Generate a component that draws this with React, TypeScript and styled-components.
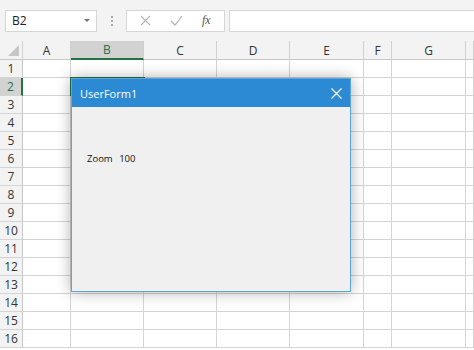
import { Fragment } from "react";
import styled, { createGlobalStyle } from "styled-components";

const GlobalStyle = createGlobalStyle`
    html, body { margin: 0; padding: 0; background: #ffffff; }
    body { font-family: "Open Sans", "Noto Sans", "Liberation Sans", sans-serif; }
`;

const Page = styled.div`
    width: 474px;
    height: 350px;
    overflow: hidden;
    position: relative;
    background: #ffffff;
`;

// Formula bar
const Toolbar = styled.div`
    height: 41px;
    background: #f3f3f3;
    display: flex;
    align-items: center;
    padding-left: 5px;
    box-sizing: border-box;
`;

const NameBox = styled.div`
    width: 92px;
    height: 22px;
    background: #ffffff;
    border: 1px solid #d6d6d6;
    box-sizing: border-box;
    display: flex;
    align-items: center;
    justify-content: space-between;
    padding: 0 6px 0 6px;
    font-size: 12px;
    color: #222;
`;

const Caret = styled.span`
    width: 0;
    height: 0;
    border-left: 3px solid transparent;
    border-right: 3px solid transparent;
    border-top: 3px solid #777;
`;

const Grip = styled.div`
    width: 29px;
    display: flex;
    flex-direction: column;
    align-items: center;
    gap: 2px;
    span {
        width: 2px;
        height: 2px;
        background: #a8a8a8;
    }
`;

const FormulaButtons = styled.div`
    width: 99px;
    height: 22px;
    background: #ffffff;
    border: 1px solid #d6d6d6;
    box-sizing: border-box;
    display: flex;
    align-items: center;
    justify-content: space-around;
    padding: 0 4px;
`;

const Fx = styled.span`
    font-family: "Liberation Serif", serif;
    font-style: italic;
    font-size: 12px;
    color: #555;
`;

const FormulaInput = styled.div`
    flex: 1;
    height: 22px;
    margin-left: 4px;
    background: #ffffff;
    border: 1px solid #d6d6d6;
    border-right: none;
    box-sizing: border-box;
`;

// Sheet grid
const Sheet = styled.div`
    display: grid;
    grid-template-columns: 23px 48px 73px 73px 73px 74px 28px 74px 1fr;
    grid-template-rows: 19px repeat(16, 18px);
`;

const Corner = styled.div`
    background: #f3f3f3;
    border-right: 1px solid #d0d0d0;
    border-bottom: 1px solid #c8c8c8;
    box-sizing: border-box;
    position: relative;
    &::after {
        content: "";
        position: absolute;
        right: 3px;
        bottom: 3px;
        border-left: 11px solid transparent;
        border-bottom: 11px solid #c6c6c6;
    }
`;

const ColHeader = styled.div<{ $active?: boolean }>`
    background: ${(p) => (p.$active ? "#d2d2d2" : "#f3f3f3")};
    color: ${(p) => (p.$active ? "#217346" : "#333")};
    border-right: 1px solid #d0d0d0;
    border-bottom: ${(p) => (p.$active ? "2px solid #217346" : "1px solid #c8c8c8")};
    box-sizing: border-box;
    font-size: 12px;
    display: flex;
    align-items: center;
    justify-content: center;
`;

const RowHeader = styled.div<{ $active?: boolean }>`
    background: ${(p) => (p.$active ? "#d2d2d2" : "#f3f3f3")};
    color: ${(p) => (p.$active ? "#217346" : "#333")};
    border-right: ${(p) => (p.$active ? "2px solid #217346" : "1px solid #c8c8c8")};
    border-bottom: 1px solid #d4d4d4;
    box-sizing: border-box;
    font-size: 12px;
    display: flex;
    align-items: center;
    justify-content: center;
`;

const Cell = styled.div<{ $selected?: boolean }>`
    border-right: 1px solid #d4d4d4;
    border-bottom: 1px solid #d4d4d4;
    box-sizing: border-box;
    ${(p) => p.$selected && "outline: 2px solid #217346; outline-offset: -1px;"}
`;

// UserForm dialog floating over the sheet
const Dialog = styled.div`
    position: absolute;
    left: 71px;
    top: 78px;
    width: 280px;
    height: 214px;
    background: #f0f0f0;
    border: 1px solid #5aa6db;
    box-sizing: border-box;
    box-shadow: 0 0 14px rgba(0, 0, 0, 0.32);
    display: flex;
    flex-direction: column;
`;

const TitleBar = styled.div`
    height: 28px;
    background: #2b8ad3;
    color: #ffffff;
    display: flex;
    align-items: center;
    justify-content: space-between;
    padding: 0 8px 0 8px;
    font-size: 11px;
`;

const DialogBody = styled.div`
    flex: 1;
    padding: 45px 0 0 15px;
`;

const Label = styled.div`
    font-size: 9.5px;
    color: #111;
    word-spacing: 4px;
`;

const columns = ["A", "B", "C", "D", "E", "F", "G", ""];

function App() {
    const rows = Array.from({ length: 16 }, (_, i) => i + 1);
    return (
        <Page>
            <GlobalStyle />
            <Toolbar>
                <NameBox>
                    B2
                    <Caret />
                </NameBox>
                <Grip>
                    <span />
                    <span />
                    <span />
                </Grip>
                <FormulaButtons>
                    <svg width="11" height="11" viewBox="0 0 11 11">
                        <path d="M1 1 L10 10 M10 1 L1 10" stroke="#b5b5b5" strokeWidth="1.2" fill="none" />
                    </svg>
                    <svg width="13" height="11" viewBox="0 0 13 11">
                        <path d="M1 6 L5 10 L12 1" stroke="#b5b5b5" strokeWidth="1.2" fill="none" />
                    </svg>
                    <Fx>fx</Fx>
                </FormulaButtons>
                <FormulaInput />
            </Toolbar>
            <Sheet>
                <Corner />
                {columns.map((c, i) => (
                    <ColHeader key={i} $active={c === "B"}>{c}</ColHeader>
                ))}
                {rows.map((r) => (
                    <Fragment key={r}>
                        <RowHeader $active={r === 2}>{r}</RowHeader>
                        {columns.map((c, i) => (
                            <Cell key={i} $selected={r === 2 && c === "B"} />
                        ))}
                    </Fragment>
                ))}
            </Sheet>
            <Dialog>
                <TitleBar>
                    UserForm1
                    <svg width="11" height="11" viewBox="0 0 11 11">
                        <path d="M0.5 0.5 L10.5 10.5 M10.5 0.5 L0.5 10.5" stroke="#ffffff" strokeWidth="1.2" fill="none" />
                    </svg>
                </TitleBar>
                <DialogBody>
                    <Label>Zoom 100</Label>
                </DialogBody>
            </Dialog>
        </Page>
    );
}

export default App;
